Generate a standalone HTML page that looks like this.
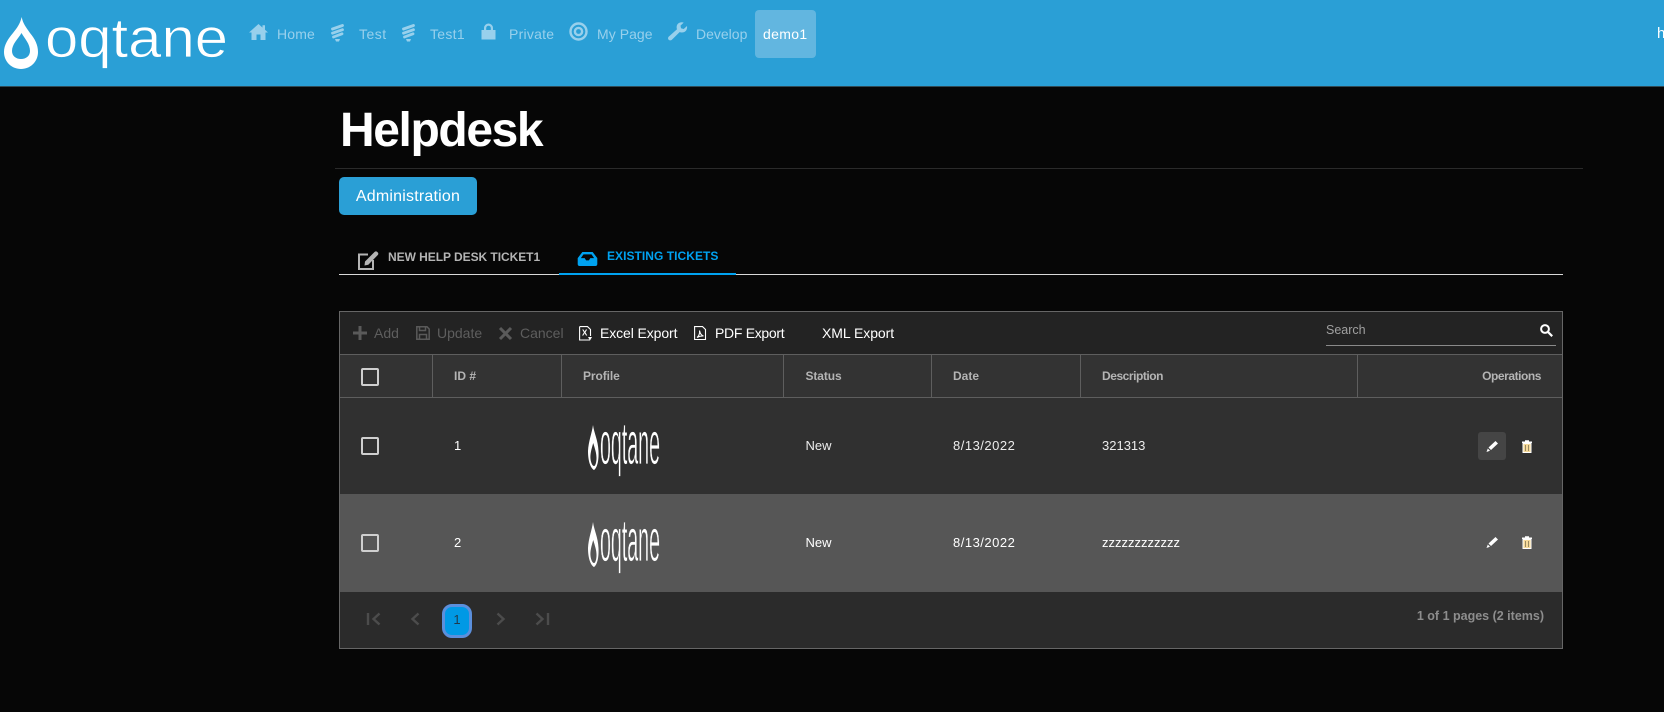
<!DOCTYPE html>
<html><head><meta charset="utf-8"><title>Helpdesk</title>
<style>
html,body{margin:0;padding:0;background:#060606;}
body{width:1664px;height:712px;overflow:hidden;position:relative;font-family:"Liberation Sans",sans-serif;color:#fff;}
.a{position:absolute;white-space:nowrap;}
.t{position:absolute;white-space:nowrap;line-height:20px;height:20px;}
svg{position:absolute;overflow:visible;}
.nav{font-size:14px;color:#98d0ec;top:24px;}
.dis{color:#5e5e5e;font-size:14px;top:323px;}
.tb{color:#fff;font-size:14px;top:323px;}
.th{color:#b4b4b4;font-size:12px;font-weight:bold;top:366px;}
.td{color:#ececec;font-size:13px;}
.cb{position:absolute;width:14px;height:14px;border:2px solid #cfcfcf;border-radius:2px;left:361px;}
</style></head><body>
<div class="a" style="left:0;top:0;width:1664px;height:86px;background:#2a9fd6;"></div>
<div class="a" style="left:0;top:86px;width:1664px;height:1px;background:#2f4a55;"></div>

<!-- logo -->
<svg style="left:0;top:0" width="240" height="86"><path fill-rule="evenodd" fill="#fff" d="M21.700 17C23 24 26 27 30 33C35 39 38 45 38 52C38 62 30 69 21 69C12 69 4 62 4 52C4 45 8 39 13 33C17 28 20 24 21.700 17ZM21.500 33C18 39 12 44 12 51C12 56 16 59 21 59C26 59 30 56 30 51C30 44 25 39 21.500 33Z"/>
<text x="45" y="57" font-family="Liberation Sans" font-size="56" fill="#fff" stroke="#2a9fd6" stroke-width=".7" textLength="183" lengthAdjust="spacingAndGlyphs">oqtane</text></svg>

<!-- nav icons -->
<svg style="left:249px;top:24px" width="19" height="17" viewBox="0 0 19 17"><path fill="#98d0ec" d="M9.500 0L13.500 3.600V1.200H16V5.800L19 8.500H16.500V16H11.500V10.500H7.500V16H2.500V8.500H0Z"/></svg>
<svg style="left:331px;top:24px" width="13" height="19" viewBox="0 0 13 19"><g fill="none" stroke="#98d0ec" stroke-width="2.800" stroke-linecap="round"><path d="M1.500 5L11.500 1.500M1.500 9.200L11.500 5.700M2.500 13L11 9.800"/></g><path fill="#98d0ec" d="M4 15H9L8 17.500H5Z"/></svg>
<svg style="left:402px;top:24px" width="13" height="19" viewBox="0 0 13 19"><g fill="none" stroke="#98d0ec" stroke-width="2.800" stroke-linecap="round"><path d="M1.500 5L11.500 1.500M1.500 9.200L11.500 5.700M2.500 13L11 9.800"/></g><path fill="#98d0ec" d="M4 15H9L8 17.500H5Z"/></svg>
<svg style="left:481px;top:23px" width="15" height="17" viewBox="0 0 15 17"><path fill="#98d0ec" d="M1 7H3V5A4.500 4.500 0 0 1 12 5V7H14.500V16.500H.5V7ZM5.200 7H9.800V5A2.300 2.300 0 0 0 5.200 5Z"/></svg>
<svg style="left:569px;top:22px" width="19" height="19" viewBox="0 0 19 19"><circle cx="9.500" cy="9.500" r="8" fill="none" stroke="#98d0ec" stroke-width="2.400"/><circle cx="9.500" cy="9.500" r="3.600" fill="none" stroke="#98d0ec" stroke-width="2.400"/></svg>
<svg style="left:668px;top:22px" width="20" height="19" viewBox="0 0 20 19"><path fill="#98d0ec" d="M19 4L15.700 7L13 6.300L12.500 3.600L15.700 .6C12.800-.5 9.300 1 8.700 4.200C8.500 5.400 8.700 6.300 9 7.300L.9 14.500C-.3 15.600-.1 17 .7 17.800C1.600 18.600 2.900 18.600 3.900 17.700L11.600 10.100C14 11 17 10.300 18.300 8.200C19 7 19.300 5.400 19 4Z"/></svg>

<div class="t nav" style="left:277px;letter-spacing:.15px">Home</div>
<div class="t nav" style="left:359px;letter-spacing:.5px">Test</div>
<div class="t nav" style="left:430px;letter-spacing:.3px">Test1</div>
<div class="t nav" style="left:509px;letter-spacing:.25px">Private</div>
<div class="t nav" style="left:597px;letter-spacing:.05px">My Page</div>
<div class="t nav" style="left:696px">Develop</div>
<div class="a" style="left:755px;top:10px;width:61px;height:48px;background:#62b6e0;border-radius:4px;"></div>
<div class="t" style="left:763px;top:24px;font-size:14px;color:#fff;letter-spacing:.35px;">demo1</div>
<div class="t" style="left:1657px;top:24px;font-size:15px;color:#fff;">h</div>

<!-- title -->
<div class="a" style="left:340px;top:103px;font-size:48px;line-height:56px;font-weight:bold;color:#fff;letter-spacing:-1.4px;">Helpdesk</div>
<div class="a" style="left:335px;top:168px;width:1248px;height:1px;background:#2a2a2a;"></div>
<div class="a" style="left:339px;top:177px;width:138px;height:38px;background:#2a9fd6;border-radius:5px;"></div>
<div class="a" style="left:339px;top:178px;width:138px;height:38px;line-height:38px;text-align:center;font-size:16px;color:#fff;letter-spacing:.2px;">Administration</div>

<!-- tabs -->
<div class="a" style="left:339px;top:274px;width:1224px;height:1px;background:#d8d8d8;"></div>
<div class="a" style="left:559px;top:273px;width:177px;height:2px;background:#00a2f0;"></div>
<svg style="left:357px;top:251px" width="22" height="19" viewBox="0 0 22 19"><path fill="none" stroke="#b4b4b4" stroke-width="2" d="M11 3.500H2V18H16V9"/><path fill="#b4b4b4" d="M8 10.500L17.500 1C18.300.2 19.500.2 20.300 1L20.800 1.500C21.500 2.300 21.500 3.300 20.800 4L11.300 13.800L7.500 14.500Z"/></svg>
<svg style="left:577px;top:252px" width="21" height="14" viewBox="0 0 21 15"><path fill="#00a2f0" d="M5 0H16L21 6.500V13C21 14.200 20.200 15 19 15H2C.8 15 0 14.200 0 13V6.500ZM6.200 2.500L3.400 6.500H7.500L9 9H12L13.500 6.500H17.600L14.800 2.500Z"/></svg>
<div class="t" style="left:388px;top:247px;font-size:12px;font-weight:bold;color:#b4b4b4;letter-spacing:-.05px;">NEW HELP DESK TICKET1</div>
<div class="t" style="left:607px;top:246px;font-size:12px;font-weight:bold;color:#00a2f0;letter-spacing:.05px;">EXISTING TICKETS</div>

<!-- grid -->
<div class="a" style="left:339px;top:311px;width:1222px;height:336px;border:1px solid #666;background:#2b2b2b;"></div>
<div class="a" style="left:340px;top:312px;width:1222px;height:42px;background:#232323;"></div>
<div class="a" style="left:340px;top:354px;width:1222px;height:1px;background:#5e5e5e;"></div>
<div class="a" style="left:340px;top:355px;width:1222px;height:42px;background:#333;"></div>
<div class="a" style="left:340px;top:397px;width:1222px;height:1px;background:#5e5e5e;"></div>
<div class="a" style="left:340px;top:398px;width:1222px;height:96px;background:#303030;"></div>
<div class="a" style="left:340px;top:494px;width:1222px;height:98px;background:#565656;"></div>
<div class="a" style="left:432px;top:355px;width:1px;height:42px;background:#5e5e5e;"></div>
<div class="a" style="left:561px;top:355px;width:1px;height:42px;background:#5e5e5e;"></div>
<div class="a" style="left:783px;top:355px;width:1px;height:42px;background:#5e5e5e;"></div>
<div class="a" style="left:931px;top:355px;width:1px;height:42px;background:#5e5e5e;"></div>
<div class="a" style="left:1080px;top:355px;width:1px;height:42px;background:#5e5e5e;"></div>
<div class="a" style="left:1357px;top:355px;width:1px;height:42px;background:#5e5e5e;"></div>

<!-- toolbar -->
<svg style="left:353px;top:326px" width="14" height="14"><path fill="#5a5a5a" d="M5.500 0H8.500V5.500H14V8.500H8.500V14H5.500V8.500H0V5.500H5.500Z"/></svg>
<div class="t dis" style="left:374px;">Add</div>
<svg style="left:416px;top:326px" width="14" height="14"><path fill="none" stroke="#5a5a5a" stroke-width="1.500" d="M.8.8H11L13.200 3V13.200H.8ZM3.500.8V4.500H9.500V.8M3.500 13V8.500H10.500V13"/></svg>
<div class="t dis" style="left:437px;">Update</div>
<svg style="left:499px;top:327px" width="13" height="13"><path fill="none" stroke="#5a5a5a" stroke-width="3" d="M1 1L12 12M12 1L1 12"/></svg>
<div class="t dis" style="left:520px;">Cancel</div>
<svg style="left:579px;top:326px" width="13" height="15" viewBox="0 0 13 15"><path fill="none" stroke="#fff" stroke-width="1.100" d="M.6.600H8.500L11.500 3.500V10M11 14H.6V.600"/><text x="3" y="9.500" font-size="8" font-weight="bold" font-family="Liberation Sans" fill="#fff">X</text><path fill="#fff" d="M9 11H13L11 14.500Z"/></svg>
<div class="t tb" style="left:600px;letter-spacing:-.1px">Excel Export</div>
<svg style="left:694px;top:326px" width="13" height="15" viewBox="0 0 13 15"><path fill="none" stroke="#fff" stroke-width="1.100" d="M.6.600H8.500L11.500 3.500V13.500H.6ZM3 11.500C5 10 6 7 5.500 4.500C6 7 7.500 9.500 9.500 10C7 9.800 5 10.300 3 11.500Z"/></svg>
<div class="t tb" style="left:715px;letter-spacing:-.3px">PDF Export</div>
<div class="t tb" style="left:822px;letter-spacing:-.05px">XML Export</div>
<div class="t" style="left:1326px;top:320px;font-size:12.500px;color:#a0a0a0;">Search</div>
<div class="a" style="left:1326px;top:345px;width:230px;height:1px;background:#8a8a8a;"></div>
<svg style="left:1540px;top:324px" width="13" height="13" viewBox="0 0 13 13"><circle cx="5" cy="5" r="3.900" fill="none" stroke="#fff" stroke-width="2"/><path stroke="#fff" stroke-width="2.200" d="M8 8L12.200 12.200"/></svg>

<!-- headers -->
<div class="cb" style="top:368px"></div>
<div class="t th" style="left:454px">ID #</div>
<div class="t th" style="left:583px;letter-spacing:-.1px">Profile</div>
<div class="t th" style="left:805.500px;letter-spacing:-.1px">Status</div>
<div class="t th" style="left:953px">Date</div>
<div class="t th" style="left:1102px;letter-spacing:-.45px">Description</div>
<div class="t th" style="right:123px;letter-spacing:-.45px">Operations</div>

<!-- rows -->
<div class="cb" style="top:437px"></div>
<div class="t td" style="left:454px;top:436px;color:#fff">1</div>
<svg style="left:587px;top:423px" width="75" height="54" viewBox="0 0 75 54"><path fill-rule="evenodd" fill="#fff" d="M6 2C7 10 11 17 11.500 28C12 38 10 45 7 47C3.500 45 1 38 1 28C1.500 18 5 10 6 2ZM6.200 20C4.500 26 3 31 3.500 36C4 40 5.500 43 7 43C8.500 43 9.500 39 9.500 35C9.500 30 8 26 6.200 20Z"/><text x="13" y="41" font-family="Liberation Sans" font-size="60" fill="#fff" stroke="#303030" stroke-width=".8" textLength="60" lengthAdjust="spacingAndGlyphs">oqtane</text></svg>
<div class="t td" style="left:805.500px;top:436px">New</div>
<div class="t td" style="left:953px;top:436px;letter-spacing:.5px">8/13/2022</div>
<div class="t td" style="left:1102px;top:436px">321313</div>
<div class="a" style="left:1478px;top:432px;width:28px;height:28px;background:#454545;border-radius:3px;"></div>

<div class="cb" style="top:534px"></div>
<div class="t td" style="left:454px;top:533px;color:#fff">2</div>
<svg style="left:587px;top:520px" width="75" height="54" viewBox="0 0 75 54"><path fill-rule="evenodd" fill="#fff" d="M6 2C7 10 11 17 11.500 28C12 38 10 45 7 47C3.500 45 1 38 1 28C1.500 18 5 10 6 2ZM6.200 20C4.500 26 3 31 3.500 36C4 40 5.500 43 7 43C8.500 43 9.500 39 9.500 35C9.500 30 8 26 6.200 20Z"/><text x="13" y="41" font-family="Liberation Sans" font-size="60" fill="#fff" stroke="#565656" stroke-width=".8" textLength="60" lengthAdjust="spacingAndGlyphs">oqtane</text></svg>
<div class="t td" style="left:805.500px;top:533px;color:#fff">New</div>
<div class="t td" style="left:953px;top:533px;color:#fff;letter-spacing:.5px">8/13/2022</div>
<div class="t td" style="left:1102px;top:533px;color:#fff;">zzzzzzzzzzzz</div>

<!-- action icons -->
<svg style="left:1486px;top:440px" width="13" height="13" viewBox="0 0 13 13"><path fill="#fff" d="M9.500 1L12 3.500L5 10L2.500 7.500ZM1.800 8.500L4 10.700L.5 12Z"/></svg>
<svg style="left:1486px;top:536px" width="13" height="13" viewBox="0 0 13 13"><path fill="#fff" d="M9.500 1L12 3.500L5 10L2.500 7.500ZM1.800 8.500L4 10.700L.5 12Z"/></svg>
<svg style="left:1522px;top:440px" width="10" height="13" viewBox="0 0 10 13"><path fill="#fff" d="M0 1.500H3V.3H7V1.500H10V3H0Z"/><path fill="#f5d99a" stroke="#fff" d="M1 3.500H9V12.500H1Z"/><path stroke="#9a8a60" d="M3.500 5V11M6.500 5V11"/></svg>
<svg style="left:1522px;top:536px" width="10" height="13" viewBox="0 0 10 13"><path fill="#fff" d="M0 1.500H3V.3H7V1.500H10V3H0Z"/><path fill="#f5d99a" stroke="#fff" d="M1 3.500H9V12.500H1Z"/><path stroke="#9a8a60" d="M3.500 5V11M6.500 5V11"/></svg>

<!-- pager -->
<svg style="left:366px;top:612px" width="15" height="14" viewBox="0 0 15 14"><path fill="none" stroke="#4c4c4c" stroke-width="2.400" d="M2 1V13M13.500 1.500L7.500 7L13.500 12.500"/></svg>
<svg style="left:411px;top:612px" width="9" height="14" viewBox="0 0 9 14"><path fill="none" stroke="#4c4c4c" stroke-width="2.400" d="M7.500 1.500L1.500 7L7.500 12.500"/></svg>
<div class="a" style="left:442px;top:604px;width:24px;height:28px;border:3px solid #5b8fdc;border-radius:10px;background:#0099e5;"></div>
<div class="t" style="left:442px;top:600px;width:30px;text-align:center;line-height:40px;height:40px;font-size:13px;color:#1f3a4d;">1</div>
<svg style="left:496px;top:612px" width="9" height="14" viewBox="0 0 9 14"><path fill="none" stroke="#4c4c4c" stroke-width="2.400" d="M1.500 1.500L7.500 7L1.500 12.500"/></svg>
<svg style="left:535px;top:612px" width="15" height="14" viewBox="0 0 15 14"><path fill="none" stroke="#4c4c4c" stroke-width="2.400" d="M13 1V13M1.500 1.500L7.500 7L1.500 12.500"/></svg>
<div class="t" style="right:120px;top:606px;font-size:12.500px;font-weight:bold;color:#8d8d8d;letter-spacing:0;">1 of 1 pages (2 items)</div>
</body></html>
